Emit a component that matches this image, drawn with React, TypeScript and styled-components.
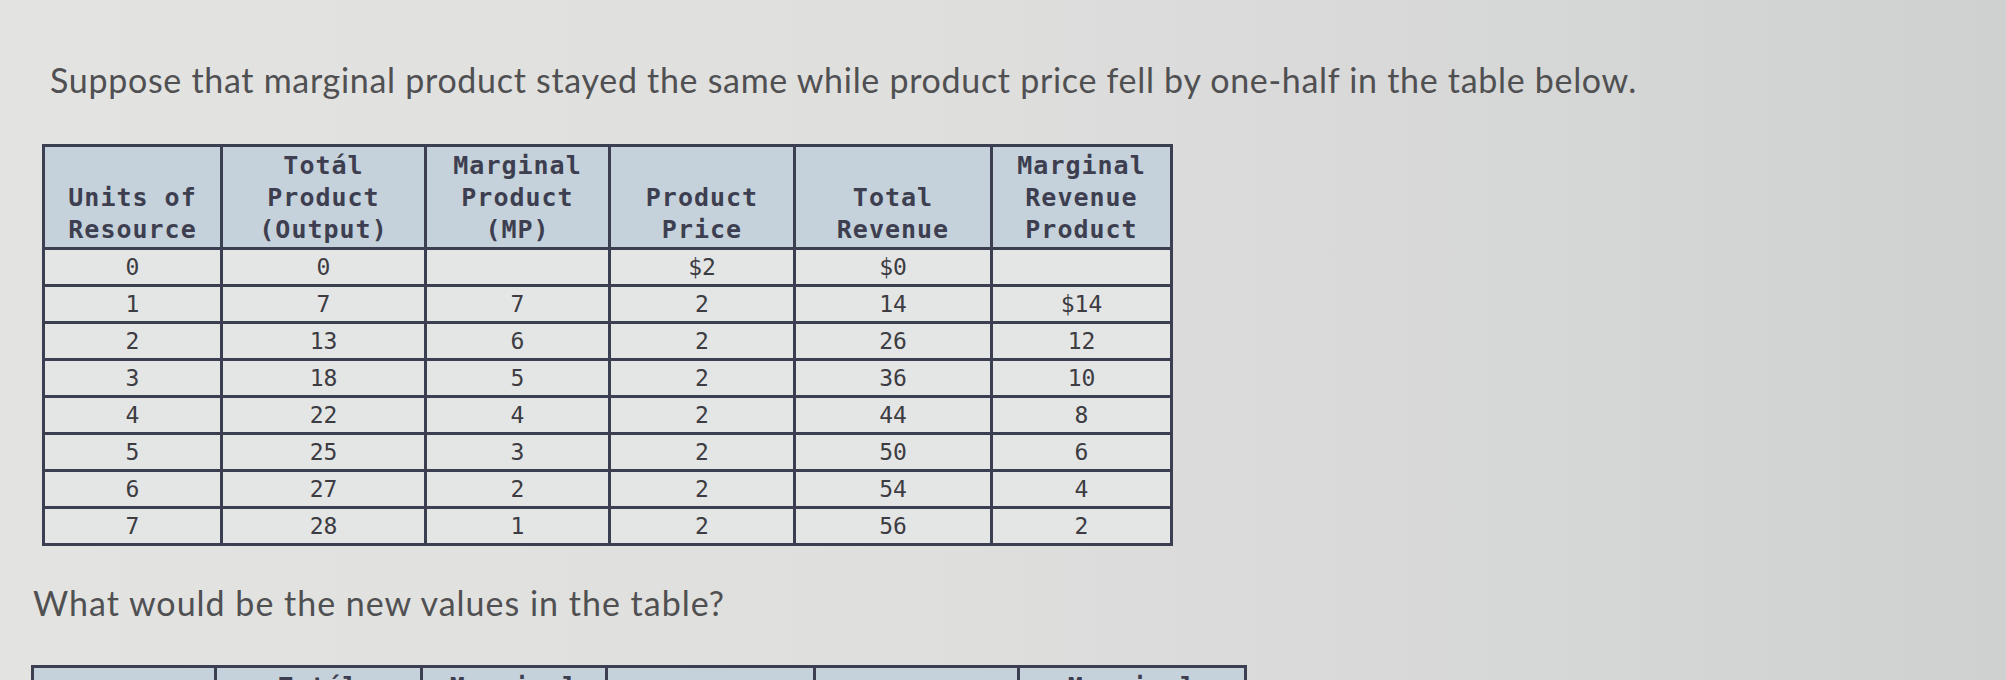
import styled, { createGlobalStyle } from "styled-components";

const GlobalStyle = createGlobalStyle`
  * {
    box-sizing: border-box;
  }
  html, body {
    margin: 0;
    padding: 0;
  }
  body {
    width: 2006px;
    height: 680px;
    overflow: hidden;
    background: linear-gradient(90deg, #e3e3e1 0%, #dfdfde 45%, #d5d6d6 80%, #cfd0d0 100%);
  }
`;

interface Row {
  units: string;
  total: string;
  marginal: string;
  price: string;
  revenue: string;
  mrp: string;
}

const rows: Row[] = [
  { units: "0", total: "0", marginal: "", price: "$2", revenue: "$0", mrp: "" },
  { units: "1", total: "7", marginal: "7", price: "2", revenue: "14", mrp: "$14" },
  { units: "2", total: "13", marginal: "6", price: "2", revenue: "26", mrp: "12" },
  { units: "3", total: "18", marginal: "5", price: "2", revenue: "36", mrp: "10" },
  { units: "4", total: "22", marginal: "4", price: "2", revenue: "44", mrp: "8" },
  { units: "5", total: "25", marginal: "3", price: "2", revenue: "50", mrp: "6" },
  { units: "6", total: "27", marginal: "2", price: "2", revenue: "54", mrp: "4" },
  { units: "7", total: "28", marginal: "1", price: "2", revenue: "56", mrp: "2" },
];

const headers: string[][] = [
  ["Units of", "Resource"],
  ["Totál", "Product", "(Output)"],
  ["Marginal", "Product", "(MP)"],
  ["Product", "Price"],
  ["Total", "Revenue"],
  ["Marginal", "Revenue", "Product"],
];

interface ResourceTableProps {
  widths: number[];
  indent: number;
  gap: number;
  showBody?: boolean;
}

function ResourceTable(props: ResourceTableProps): JSX.Element {
  const { widths, indent, gap, showBody = true } = props;

  return (
    <Table $indent={indent} $gap={gap}>
      <colgroup>
        {widths.map((w, i) => (
          <col key={i} style={{ width: w }} />
        ))}
      </colgroup>
      <thead>
        <tr>
          {headers.map((lines, i) => (
            <HeadCell key={i}>
              {lines.map((line, j) => (
                <HeadLine key={j}>{line}</HeadLine>
              ))}
            </HeadCell>
          ))}
        </tr>
      </thead>
      {showBody && (
        <tbody>
          {rows.map((row) => (
            <tr key={row.units}>
              <Cell>{row.units}</Cell>
              <Cell>{row.total}</Cell>
              <Cell>{row.marginal}</Cell>
              <Cell>{row.price}</Cell>
              <Cell>{row.revenue}</Cell>
              <Cell>{row.mrp}</Cell>
            </tr>
          ))}
        </tbody>
      )}
    </Table>
  );
}

export default function App(): JSX.Element {
  return (
    <>
      <GlobalStyle />
      <Page>
        <Prompt $indent={18}>
          Suppose that marginal product stayed the same while product price
          fell by one-half in the table below.
        </Prompt>
        <ResourceTable
          widths={[178, 204, 184, 185, 197, 180]}
          indent={10}
          gap={44}
        />
        <Question $indent={1}>What would be the new values in the table?</Question>
        <ResourceTable
          widths={[183, 206, 185, 208, 204, 227]}
          indent={-1}
          gap={42}
          showBody={false}
        />
      </Page>
    </>
  );
}

const Page = styled.div`
  padding: 60px 0 0 32px;
  display: flex;
  flex-direction: column;
  align-items: flex-start;
`;

const Prompt = styled.p<{ $indent: number }>`
  margin: 0 0 0 ${(p) => p.$indent}px;
  font-family: Lato, "Open Sans", sans-serif;
  font-size: 34px;
  line-height: 40px;
  letter-spacing: 0.7px;
  color: #505052;
  white-space: nowrap;
`;

const Question = styled(Prompt)`
  margin-top: 37px;
  font-size: 34px;
  letter-spacing: 1px;
`;

const Table = styled.table<{ $indent: number; $gap: number }>`
  margin: ${(p) => p.$gap}px 0 0 ${(p) => p.$indent}px;
  border-collapse: separate;
  border-spacing: 0;
  table-layout: fixed;
  border-top: 3px solid #3c3e52;
  border-left: 3px solid #3c3e52;
  font-family: "DejaVu Sans Mono", "Liberation Mono", monospace;
`;

const HeadCell = styled.th`
  height: 103px;
  padding: 0 4px 1px;
  vertical-align: bottom;
  text-align: center;
  background: #c6d2db;
  border-right: 3px solid #3c3e52;
  border-bottom: 3px solid #3c3e52;
  color: #3d3f50;
  font-size: 25px;
  font-weight: bold;
  letter-spacing: 1px;
`;

const HeadLine = styled.div`
  line-height: 32px;
  white-space: nowrap;
`;

const Cell = styled.td`
  height: 37px;
  padding: 0;
  text-align: center;
  vertical-align: middle;
  background: #e4e5e5;
  border-right: 3px solid #3c3e52;
  border-bottom: 3px solid #3c3e52;
  color: #3c3c42;
  font-size: 23px;
  line-height: 34px;
`;
